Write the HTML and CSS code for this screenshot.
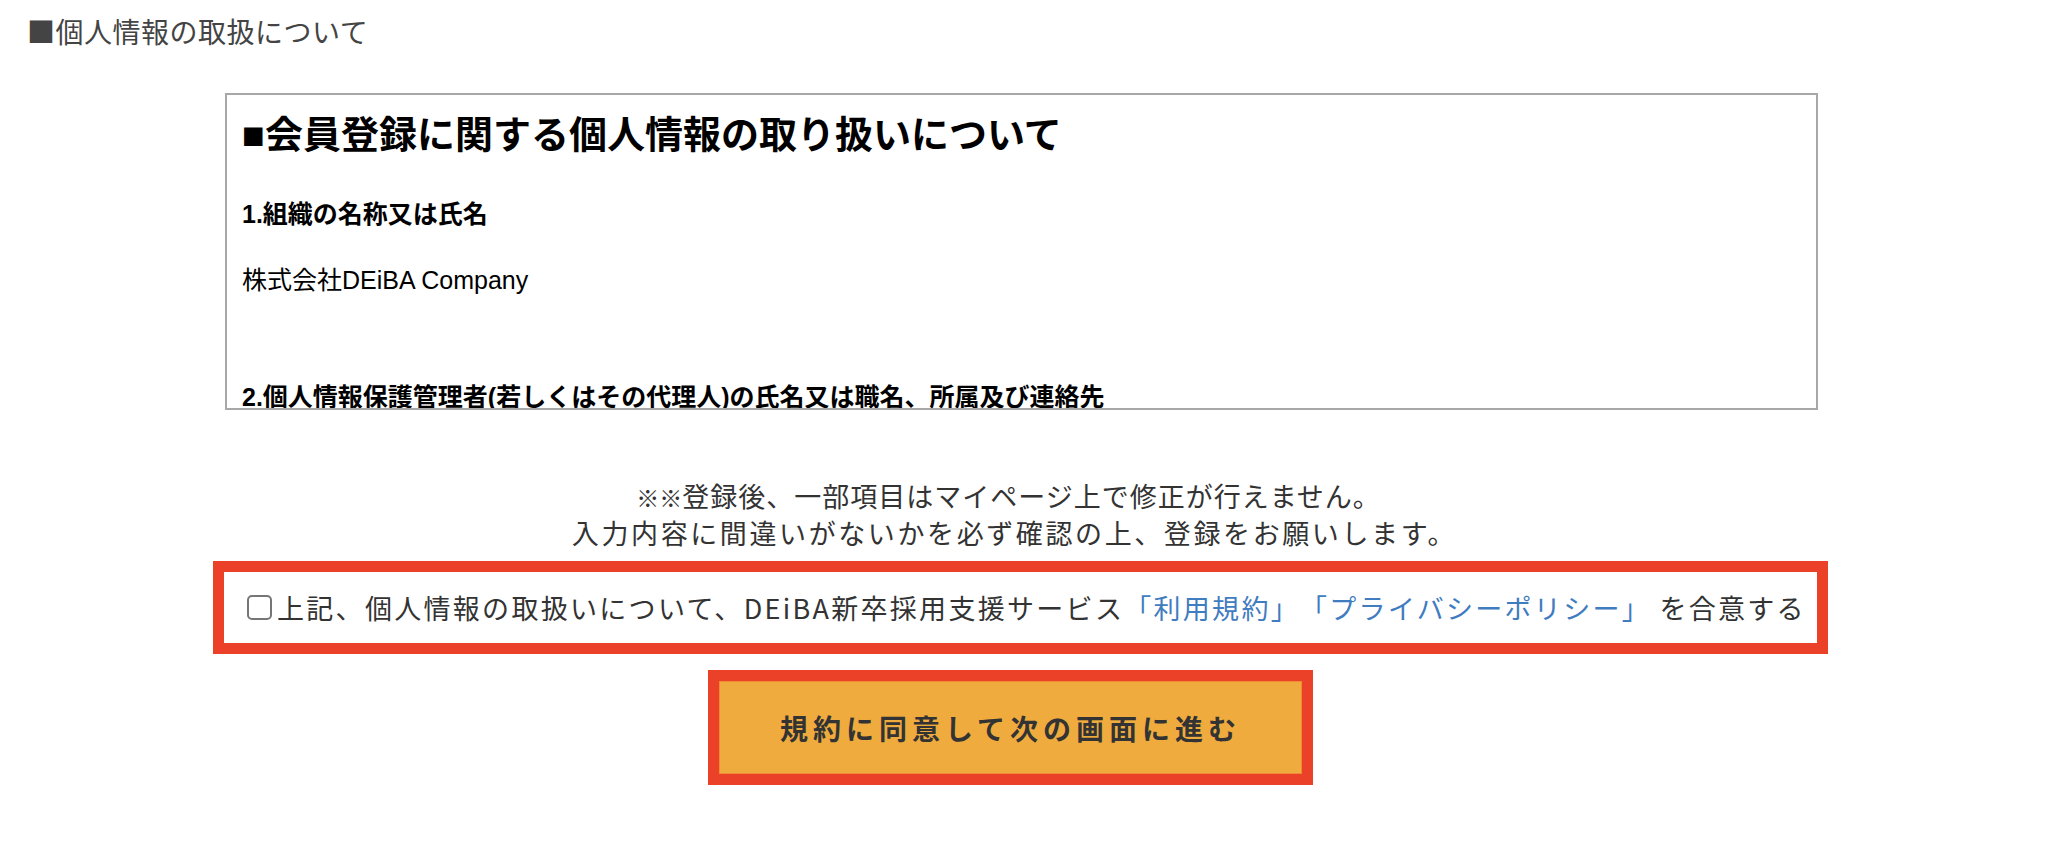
FILE: index.html
```html
<!DOCTYPE html>
<html lang="ja">
<head>
<meta charset="utf-8">
<title>個人情報の取扱について</title>
<link rel="stylesheet" href="styles.css">
</head>
<body>
<div class="page">
  <p class="section-label">■個人情報の取扱について</p>
  <div class="content">
    <div class="policy-box">
      <h2 class="policy-title">■会員登録に関する個人情報の取り扱いについて</h2>
      <h3 class="policy-head">1.組織の名称又は氏名</h3>
      <p class="policy-text">株式会社DEiBA Company</p>
      <h3 class="policy-head policy-section">2.個人情報保護管理者(若しくはその代理人)の氏名又は職名、所属及び連絡先</h3>
      <p class="policy-text">管理者名：個人情報保護管理者</p>
      <p class="policy-text">連絡先：株式会社DEiBA Company</p>
    </div>
    <div class="notice">
      <p class="notice-line notice-line-first"><span class="notice-mark">※※</span>登録後、一部項目はマイページ上で修正が行えません。</p>
      <p class="notice-line">入力内容に間違いがないかを必ず確認の上、登録をお願いします。</p>
    </div>
    <label class="agree-box">
      <input type="checkbox" class="agree-check">
      <span class="agree-text">上記、個人情報の取扱いについて、DEiBA新卒採用支援サービス<a class="agree-link" href="#">「利用規約」「プライバシーポリシー」</a> を合意する</span>
    </label>
    <div class="submit-row">
      <button type="button" class="submit-btn">規約に同意して次の画面に進む</button>
    </div>
  </div>
</div>
</body>
</html>
```

FILE: styles.css
```css
html, body {
  margin: 0;
  padding: 0;
  background: #ffffff;
}

body {
  font-family: "Noto Sans CJK JP", "Noto Sans", sans-serif;
  color: #333333;
  text-spacing-trim: space-all;
}

.page {
  padding: 12px 0 0 27px;
}

.section-label {
  margin: 0;
  font-size: 28px;
  line-height: 38px;
  letter-spacing: 0.5px;
  color: #444444;
}

.content {
  margin-left: 186px;
  width: 1615px;
  margin-top: 43px;
}

.policy-box {
  margin: 0 10px 0 12px;
  height: 313px;
  border: 2px solid #a8a8a8;
  padding: 0 15px;
  overflow: hidden;
  color: #000000;
  font-family: "Liberation Sans", "Noto Sans CJK JP", sans-serif;
}

.policy-title {
  margin: 14px 0 0;
  font-size: 38px;
  line-height: 52px;
  font-weight: 700;
}

.policy-head {
  margin: 35px 0 0;
  font-size: 25px;
  line-height: 37px;
  font-weight: 700;
}

.policy-text {
  margin: 29px 0 0;
  font-size: 25px;
  line-height: 37px;
}

.policy-head.policy-section {
  margin-top: 80px;
}

.notice {
  margin-top: 68px;
  text-align: center;
  padding-right: 12px;
}

.notice-line {
  margin: 0;
  font-size: 27px;
  line-height: 36px;
  letter-spacing: 2.6px;
  color: #333333;
}

.notice-line-first {
  letter-spacing: 1px;
  padding-right: 12px;
}

.notice-mark {
  font-size: 23px;
  letter-spacing: 0;
  font-weight: 700;
}

.agree-box {
  margin-top: 10px;
  height: 71px;
  border: 11px solid #ea4128;
  padding-left: 23px;
  display: flex;
  align-items: center;
  cursor: pointer;
}

.agree-check {
  appearance: none;
  -webkit-appearance: none;
  margin: 0 5px 0 0;
  width: 25px;
  height: 25px;
  border: 2px solid #767676;
  border-radius: 5px;
  background: #ffffff;
  box-sizing: border-box;
  flex: none;
}

.agree-text {
  font-size: 27px;
  line-height: 36px;
  letter-spacing: 2.3px;
  color: #333333;
  white-space: nowrap;
}

.agree-link {
  color: #3f7cc0;
  text-decoration: none;
}

.submit-row {
  margin-top: 16px;
  padding-left: 495px;
}

.submit-btn {
  display: flex;
  align-items: center;
  justify-content: center;
  width: 605px;
  height: 115px;
  box-sizing: border-box;
  border: 11px solid #ea4128;
  background: #f0ab3e;
  box-shadow: inset 0 0 0 1px #f08a32;
  font-family: "Noto Sans CJK JP", sans-serif;
  font-size: 28px;
  font-weight: 700;
  letter-spacing: 5px;
  color: #333333;
  padding: 0;
  cursor: pointer;
}
```
